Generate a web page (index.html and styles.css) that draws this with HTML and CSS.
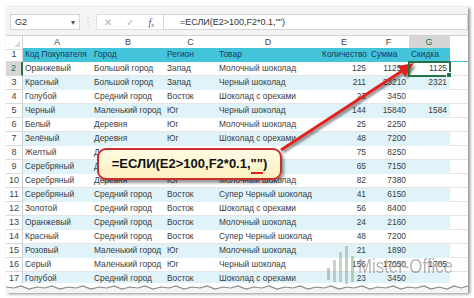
FILE: index.html
```html
<!DOCTYPE html>
<html lang="ru">
<head>
<meta charset="utf-8">
<link rel="stylesheet" href="styles.css">
</head>
<body>
<div class="page">
  <div class="sheet">
    <div class="fbar">
      <div class="namebox"><span>G2</span><span class="dd">▾</span></div>
      <div class="sep">⋮</div>
      <div class="btns"><span class="x">✕</span><span class="ok">✓</span><span class="fx"><i>f</i><sub>x</sub></span></div>
      <div class="finput">=ЕСЛИ(E2&gt;100,F2*0.1,"")</div>
    </div>
    <div class="grid">
      <div class="row colhdr"><div class="rh corner"></div><div>A</div><div>B</div><div>C</div><div>D</div><div>E</div><div>F</div><div class="selc">G</div><div class="h"></div></div>
      <div class="row hdr"><div class="rh">1</div><div>Код Покупателя</div><div>Город</div><div>Регион</div><div>Товар</div><div>Количество</div><div>Сумма</div><div>Скидка</div><div class="h"></div></div>
      <div class="row"><div class="rh selr">2</div><div>Оранжевый</div><div>Большой город</div><div>Запад</div><div>Молочный шоколад</div><div class="n">125</div><div class="n">11250</div><div class="n active">1125</div><div class="h"></div></div>
      <div class="row alt"><div class="rh">3</div><div>Красный</div><div>Большой город</div><div>Запад</div><div>Черный шоколад</div><div class="n">211</div><div class="n">23210</div><div class="n">2321</div><div class="h"></div></div>
      <div class="row"><div class="rh">4</div><div>Голубой</div><div>Средний город</div><div>Восток</div><div>Шоколад с орехами</div><div class="n">23</div><div class="n">3450</div><div class="n"></div><div class="h"></div></div>
      <div class="row alt"><div class="rh">5</div><div>Черный</div><div>Маленький город</div><div>Юг</div><div>Черный шоколад</div><div class="n">144</div><div class="n">15840</div><div class="n">1584</div><div class="h"></div></div>
      <div class="row"><div class="rh">6</div><div>Белый</div><div>Деревня</div><div>Юг</div><div>Молочный шоколад</div><div class="n">25</div><div class="n">2250</div><div class="n"></div><div class="h"></div></div>
      <div class="row alt"><div class="rh">7</div><div>Зелёный</div><div>Деревня</div><div>Юг</div><div>Шоколад с орехами</div><div class="n">48</div><div class="n">7200</div><div class="n"></div><div class="h"></div></div>
      <div class="row"><div class="rh">8</div><div>Желтый</div><div>Деревня</div><div></div><div></div><div class="n">75</div><div class="n">8250</div><div class="n"></div><div class="h"></div></div>
      <div class="row alt"><div class="rh">9</div><div>Серебряный</div><div>Деревня</div><div></div><div></div><div class="n">65</div><div class="n">7150</div><div class="n"></div><div class="h"></div></div>
      <div class="row"><div class="rh">10</div><div>Серебряный</div><div>Деревня</div><div>Юг</div><div>Молочный шоколад</div><div class="n">82</div><div class="n">7380</div><div class="n"></div><div class="h"></div></div>
      <div class="row alt"><div class="rh">11</div><div>Серебряный</div><div>Средний город</div><div>Восток</div><div>Супер Черный шоколад</div><div class="n">41</div><div class="n">6150</div><div class="n"></div><div class="h"></div></div>
      <div class="row"><div class="rh">12</div><div>Золотой</div><div>Средний город</div><div>Восток</div><div>Шоколад с орехами</div><div class="n">56</div><div class="n">8400</div><div class="n"></div><div class="h"></div></div>
      <div class="row alt"><div class="rh">13</div><div>Оранжевый</div><div>Средний город</div><div>Восток</div><div>Молочный шоколад</div><div class="n">24</div><div class="n">2160</div><div class="n"></div><div class="h"></div></div>
      <div class="row"><div class="rh">14</div><div>Красный</div><div>Средний город</div><div>Восток</div><div>Супер Черный шоколад</div><div class="n">48</div><div class="n">7200</div><div class="n"></div><div class="h"></div></div>
      <div class="row alt"><div class="rh">15</div><div>Розовый</div><div>Маленький город</div><div>Юг</div><div>Молочный шоколад</div><div class="n">21</div><div class="n">1890</div><div class="n"></div><div class="h"></div></div>
      <div class="row"><div class="rh">16</div><div>Серый</div><div>Маленький город</div><div>Юг</div><div>Черный шоколад</div><div class="n">156</div><div class="n">17050</div><div class="n">1705</div><div class="h"></div></div>
      <div class="row alt"><div class="rh">17</div><div>Голубой</div><div>Средний город</div><div>Восток</div><div>Шоколад с орехами</div><div class="n">23</div><div class="n">3450</div><div class="n"></div><div class="h"></div></div>
    </div>
    <svg class="torn" width="462" height="10" viewBox="0 0 462 10" preserveAspectRatio="none">
      <path d="M0 0 H462 V3 L455 5 L448 3 L441 6 L433 4 L425 6 L418 3 L410 5 L402 4 L395 6 L387 3 L380 5 L372 4 L364 6 L356 3 L348 5 L341 4 L333 6 L325 3 L318 5 L310 4 L302 6 L294 3 L287 5 L279 4 L271 6 L263 3 L256 5 L248 4 L240 6 L232 3 L225 5 L217 4 L209 6 L201 3 L194 5 L186 4 L178 6 L170 3 L163 5 L155 4 L147 6 L139 3 L132 5 L124 4 L116 6 L108 3 L101 5 L93 4 L85 6 L77 3 L70 5 L62 4 L54 6 L46 3 L39 5 L31 4 L23 6 L15 3 L8 5 L0 4 Z" fill="#ffffff"/>
      <path d="M462 3 L455 5 L448 3 L441 6 L433 4 L425 6 L418 3 L410 5 L402 4 L395 6 L387 3 L380 5 L372 4 L364 6 L356 3 L348 5 L341 4 L333 6 L325 3 L318 5 L310 4 L302 6 L294 3 L287 5 L279 4 L271 6 L263 3 L256 5 L248 4 L240 6 L232 3 L225 5 L217 4 L209 6 L201 3 L194 5 L186 4 L178 6 L170 3 L163 5 L155 4 L147 6 L139 3 L132 5 L124 4 L116 6 L108 3 L101 5 L93 4 L85 6 L77 3 L70 5 L62 4 L54 6 L46 3 L39 5 L31 4 L23 6 L15 3 L8 5 L0 4" fill="none" stroke="#8a8a8a" stroke-width="1.2"/>
    </svg>
  </div>

  <div class="callout">=ЕСЛИ(E2&gt;100,F2*0.1,<span class="ul">""</span>)</div>

  <svg class="arrow" width="474" height="298" viewBox="0 0 474 298">
    <defs>
      <filter id="sh" x="-10%" y="-10%" width="120%" height="120%"><feGaussianBlur stdDeviation="1"/></filter>
    </defs>
    <g filter="url(#sh)" opacity="0.45">
      <line x1="283" y1="152" x2="404" y2="73" stroke="#000" stroke-width="3"/>
      <polygon points="416,66 400,68 407,79" fill="#000"/>
    </g>
    <line x1="281" y1="150" x2="402" y2="71" stroke="#e3211c" stroke-width="3"/>
    <polygon points="414,63 398,66 405,77" fill="#e3211c"/>
  </svg>

  <div class="wm">
    <svg width="30" height="40" viewBox="0 0 30 40">
      <rect x="1" y="22" width="3" height="12" fill="#9a9a9a"/>
      <rect x="7" y="14" width="3" height="22" fill="#a8a8a8"/>
      <rect x="13" y="6" width="3" height="30" fill="#8fbf8a"/>
      <rect x="19" y="0" width="3" height="38" fill="#a0a0a0"/>
      <rect x="25" y="10" width="3" height="26" fill="#7fb27a"/>
    </svg>
    <span class="wmtext">Mister-Office</span>
  </div>
</div>
</body>
</html>
```

FILE: styles.css
```css
* { box-sizing: border-box; }
html, body { margin: 0; padding: 0; background: #ffffff; }
.page {
  position: relative;
  width: 474px;
  height: 298px;
  overflow: hidden;
  font-family: "Liberation Sans", Arial, sans-serif;
}
.sheet {
  position: absolute;
  left: 6px;
  top: 7px;
  width: 462px;
  background: #f4f4f4;
  box-shadow: 2px 1px 3px rgba(0,0,0,0.45);
  padding-top: 7px;
}
.fbar {
  display: flex;
  align-items: stretch;
  height: 16px;
  padding-left: 4px;
  margin-bottom: 5px;
}
.namebox {
  width: 70px;
  background: #fff;
  border: 1px solid #d6d6d6;
  display: flex;
  align-items: center;
  justify-content: space-between;
  padding: 0 4px 0 4px;
  font-size: 9px;
  color: #333;
}
.namebox .dd { font-size: 8px; color: #555; }
.sep {
  width: 16px;
  text-align: center;
  color: #b8b8b8;
  font-size: 10px;
  line-height: 16px;
}
.btns {
  width: 67px;
  background: #fff;
  border: 1px solid #e0e0e0;
  border-right: none;
  display: flex;
  align-items: center;
  justify-content: space-around;
  padding-right: 2px;
  font-size: 10px;
  color: #b4b4b4;
}
.btns .fx { color: #555; font-family: "Liberation Serif", serif; font-size: 10px; }
.btns .fx sub { font-size: 6px; vertical-align: -1px; font-style: italic; }
.finput {
  flex: 1;
  background: #fff;
  border: 1px solid #d6d6d6;
  font-size: 9px;
  color: #333;
  line-height: 14px;
  padding-left: 16px;
}
.grid { background: #fff; }
.row {
  display: grid;
  grid-template-columns: 17px 69px 73px 52px 103px 49px 40px 41px 18px;
  height: 14px;
  font-size: 8.4px;
  color: #3c3c3c;
}
.row > div {
  border-right: 1px solid #dcdcdc;
  border-bottom: 1px solid #e4e4e4;
  padding: 0 2px;
  line-height: 13px;
  white-space: nowrap;
  overflow: visible;
}
.row > .n { text-align: right; }
.row > .rh {
  background: #fff;
  text-align: center;
  color: #444;
  font-size: 9px;
  padding: 0;
  border-right: 1px solid #cfcfcf;
  border-bottom: 1px solid #d9d9d9;
}
.row > .h { background: #fff; border-right: none; }
.colhdr { height: 13px; background: #fff; }
.colhdr > div {
  text-align: center;
  color: #444;
  font-size: 9px;
  line-height: 12px;
  border-top: 1px solid #d2d2d2;
  border-bottom: 1px solid #c9c9c9;
  border-right: 1px solid #d9d9d9;
}
.colhdr > .corner { position: relative; }
.colhdr > .corner::after {
  content: "";
  position: absolute;
  right: 2px;
  bottom: 2px;
  border-left: 6px solid transparent;
  border-bottom: 6px solid #dadada;
}
.colhdr > .selc {
  background: #d6d6d6;
  color: #217346;
  border-bottom: 2px solid #217346;
}
.row > .selr {
  background: #d6d6d6;
  color: #217346;
  border-right: 2px solid #217346;
}
.hdr > div { background: #44c4d9; color: #193b5e; border-right-color: #44c4d9; border-bottom-color: #44c4d9; }
.hdr > .rh { background: #fff; color: #444; border-right-color: #cfcfcf; border-bottom-color: #d9d9d9; }
.hdr > .h { background: #fff; }
.alt > div { background: #dff3f8; border-right-color: #dff3f8; border-bottom-color: #dff3f8; }
.alt > .rh { background: #fff; border-right-color: #cfcfcf; border-bottom-color: #d9d9d9; }
.alt > .h { background: #fff; border-bottom-color: #e4e4e4; }
.row > div:not(.rh):not(.h) { border-right-color: transparent; }
.row > .active {
  position: relative;
  outline: 2px solid #217346;
  outline-offset: -1px;
  z-index: 1;
}
.row > .active::after {
  content: "";
  position: absolute;
  right: -3px;
  bottom: -3px;
  width: 4px;
  height: 4px;
  background: #217346;
  border: 1px solid #fff;
}
.torn {
  display: block;
  position: relative;
  margin-top: -3px;
}
.callout {
  position: absolute;
  left: 97px;
  top: 148px;
  width: 185px;
  height: 32px;
  border: 2px solid #c9302c;
  border-radius: 9px;
  background: linear-gradient(#fffbe3, #fbf0bf);
  box-shadow: 2px 3px 3px rgba(0,0,0,0.4);
  font-weight: bold;
  font-size: 13px;
  color: #111;
  text-align: center;
  line-height: 28px;
  white-space: nowrap;
}
.callout .ul {
  display: inline-block;
  line-height: 12px;
  border-bottom: 2px solid #e3211c;
  padding-bottom: 2px;
}
.arrow { position: absolute; left: 0; top: 0; }
.wm {
  position: absolute;
  left: 326px;
  top: 246px;
  display: flex;
  align-items: flex-end;
  opacity: 0.55;
  white-space: nowrap;
}
.wm svg { display: block; flex: none; }
.wmtext {
  display: inline-block;
  font-size: 21px;
  color: #7a7a7a;
  transform: scaleX(0.8);
  transform-origin: left bottom;
  margin-left: 2px;
  margin-bottom: 10px;
  line-height: 20px;
  white-space: nowrap;
}
```
